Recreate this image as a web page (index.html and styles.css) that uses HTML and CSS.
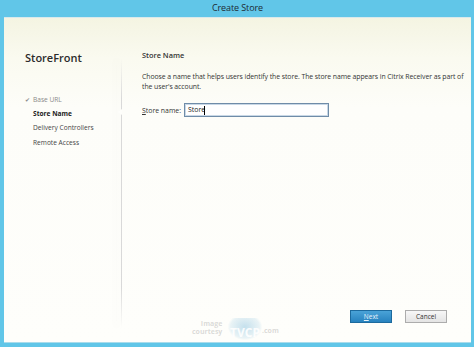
FILE: index.html
```html
<!DOCTYPE html>
<html>
<head>
<meta charset="utf-8">
<link rel="stylesheet" href="styles.css">
</head>
<body>
<div class="window">
  <div class="titlebar">Create Store</div>
  <div class="client">
    <div class="sidebar">
      <div class="brand">StoreFront</div>
      <ul class="steps">
        <li class="done"><span class="check">&#10004;</span>Base URL</li>
        <li class="current">Store Name</li>
        <li>Delivery Controllers</li>
        <li>Remote Access</li>
      </ul>
    </div>
    <div class="divider"><span class="notch"></span></div>
    <div class="main">
      <h1 class="heading">Store Name</h1>
      <p class="desc">Choose a name that helps users identify the store. The store name appears in Citrix Receiver as part of the user's account.</p>
      <div class="field">
        <label class="label"><u>S</u>tore name:</label>
        <div class="input">Store<span class="caret"></span></div>
      </div>
      <div class="buttons">
        <button class="btn primary"><u>N</u>ext</button>
        <button class="btn">Cancel</button>
      </div>
    </div>
    <div class="watermark">
      <div class="wm-text">Image<br>courtesy</div>
      <div class="wm-cloud">TVCP</div>
      <div class="wm-com">.com</div>
    </div>
  </div>
</div>
</body>
</html>
```
FILE: styles.css
```css
html, body {
  margin: 0;
  padding: 0;
}
body {
  width: 474px;
  height: 347px;
  overflow: hidden;
  font-family: "Open Sans", "Noto Sans", sans-serif;
  color: #333;
}
.window {
  width: 474px;
  height: 347px;
  box-sizing: border-box;
  background: #61c6e8;
  padding: 0 3px 4px 4px;
  display: flex;
  flex-direction: column;
}
.titlebar {
  height: 17px;
  line-height: 16px;
  text-align: center;
  font-size: 9px;
  letter-spacing: -0.1px;
  color: #1d2a33;
}
.client {
  flex: 1;
  position: relative;
  display: flex;
  background: linear-gradient(to bottom, #f4f4e2 0px, #fafaf0 40px, #fdfdf9 90px, #fefefb 100%);
  border-top: 1px solid #d8e9ec;
  border-bottom: 1px solid #a9dcec;
}
.sidebar {
  width: 117px;
  padding: 33px 0 0 21px;
  box-sizing: border-box;
}
.brand {
  font-size: 11px;
  font-weight: 600;
  color: #2b2b2b;
  line-height: 14px;
}
.steps {
  list-style: none;
  margin: 28px 0 0 0;
  padding: 0;
}
.steps li {
  font-size: 6.6px;
  line-height: 14.2px;
  color: #444;
  padding-left: 8px;
  position: relative;
  white-space: nowrap;
}
.steps li.done {
  color: #8a8a8a;
}
.steps li.current {
  font-weight: 700;
  color: #222;
}
.check {
  position: absolute;
  left: 0;
  font-size: 5.5px;
  color: #8a8a8a;
}
.divider {
  width: 1px;
  margin: 40px 0 14px 0;
  background: linear-gradient(to bottom, rgba(200,200,200,0), #d9d9d9 15%, #d9d9d9 85%, rgba(200,200,200,0));
  box-shadow: -5px 0 7px rgba(0,0,0,0.07);
  position: relative;
}
.notch {
  position: absolute;
  left: -3px;
  top: 51px;
  width: 0;
  height: 0;
  border-top: 3px solid transparent;
  border-bottom: 3px solid transparent;
  border-right: 4px solid #fefefb;
}
.main {
  flex: 1;
  display: flex;
  flex-direction: column;
  padding: 31px 22px 19px 20px;
  box-sizing: border-box;
}
.heading {
  margin: 0;
  font-size: 7.4px;
  font-weight: 600;
  line-height: 12px;
  color: #333;
}
.desc {
  margin: 11px -16px 0 0;
  font-size: 6.9px;
  letter-spacing: -0.07px;
  line-height: 10px;
  color: #333;
}
.field {
  margin-top: 11px;
  display: flex;
  align-items: center;
}
.label {
  font-size: 6.9px;
  width: 42px;
  white-space: nowrap;
  color: #333;
}
.input {
  width: 145px;
  height: 14px;
  box-sizing: border-box;
  border: 1px solid #6f8ca8;
  box-shadow: inset 0 0 0 1px #c9d8e6;
  background: #fff;
  font-size: 6.9px;
  line-height: 12px;
  padding-left: 3px;
  color: #222;
  display: flex;
  align-items: center;
}
.caret {
  display: inline-block;
  width: 1px;
  height: 9px;
  background: #000;
  margin-left: -1px;
}
.buttons {
  margin-top: auto;
  margin-right: 2px;
  display: flex;
  justify-content: flex-end;
  gap: 13px;
}
.btn {
  width: 42px;
  height: 13px;
  box-sizing: border-box;
  font-family: "Open Sans", "Noto Sans", sans-serif;
  font-size: 6.5px;
  line-height: 10px;
  padding: 0;
  border: 1px solid #acacac;
  background: linear-gradient(to bottom, #f7f7f7, #e4e4e4);
  color: #333;
}
.btn.primary {
  border: 1px solid #1c6a9e;
  background: linear-gradient(to bottom, #4aa3d8, #2782bf);
  color: #e8f4fb;
}
.watermark {
  position: absolute;
  left: 188px;
  bottom: 0;
  height: 28px;
  width: 120px;
  pointer-events: none;
}
.wm-text {
  position: absolute;
  left: 0;
  top: 6px;
  font-size: 7px;
  line-height: 8px;
  color: rgba(150,150,150,0.35);
  text-align: right;
  font-weight: 700;
}
.wm-cloud {
  position: absolute;
  left: 36px;
  top: 4px;
  width: 34px;
  height: 22px;
  background: radial-gradient(ellipse at 50% 40%, rgba(150,200,225,0.55), rgba(170,210,230,0.25) 60%, rgba(255,255,255,0) 72%);
  color: rgba(255,255,255,0.9);
  font-size: 12px;
  font-weight: 700;
  line-height: 30px;
  text-align: center;
}
.wm-com {
  position: absolute;
  left: 70px;
  top: 12px;
  font-size: 7px;
  color: rgba(150,150,150,0.35);
  font-weight: 700;
}
```
